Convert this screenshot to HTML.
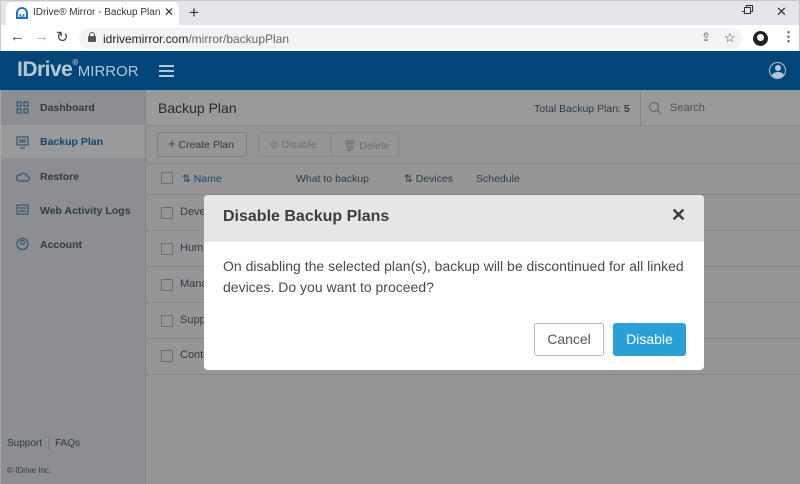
<!DOCTYPE html>
<html><head><style>
*{margin:0;padding:0;box-sizing:border-box}
body{width:800px;height:484px;overflow:hidden;font-family:"Liberation Sans",sans-serif;position:relative;background:#969696}
.abs{position:absolute}
.t{font-size:11px;color:#2e3a44}
</style></head><body>
<!-- chrome -->
<div class="abs" style="left:0;top:0;width:800px;height:25px;background:#e3e5ea;border:1px solid #c8c8c8;border-bottom:none"></div>
<div class="abs" style="left:6px;top:2px;width:173px;height:24px;background:#fff;border-radius:6px 6px 0 0"></div>
<svg class="abs" style="left:15px;top:6px" width="14" height="14"><path d="M2 7a5 5 0 0 1 10 0v5H2z" fill="none" stroke="#1a73c9" stroke-width="2"/><text x="4" y="13" font-size="7" fill="#1a73c9" font-family="Liberation Sans" font-weight="bold">M</text></svg>
<div class="abs" style="left:33px;top:7px;font-size:10px;color:#333">IDrive® Mirror - Backup Plan</div>
<div class="abs" style="left:164px;top:5px;font-size:12px;color:#333">✕</div>
<div class="abs" style="left:189px;top:3px;font-size:17px;color:#333">+</div>
<div class="abs" style="left:742px;top:11px;width:10px;height:1px;background:#333"></div>
<div class="abs" style="left:746px;top:5px;width:7px;height:7px;border:1px solid #333"></div>
<div class="abs" style="left:744px;top:7px;width:7px;height:7px;border:1px solid #333;background:#e3e5ea"></div>
<div class="abs" style="left:776px;top:4px;font-size:13px;color:#333">✕</div>
<div class="abs" style="left:0;top:25px;width:800px;height:26px;background:#fff;border-left:1px solid #c8c8c8;border-right:1px solid #c8c8c8"></div>
<div class="abs" style="left:10px;top:28px;font-size:15px;color:#444">←</div>
<div class="abs" style="left:34px;top:28px;font-size:15px;color:#aaa">→</div>
<div class="abs" style="left:56px;top:28px;font-size:15px;color:#444">↻</div>
<div class="abs" style="left:79px;top:28px;width:663px;height:21px;background:#f1f3f4;border-radius:11px"></div>
<div class="abs" style="left:89px;top:32px;width:6px;height:5px;border:1.5px solid #555;border-bottom:none;border-radius:3px 3px 0 0"></div>
<div class="abs" style="left:88px;top:36px;width:8px;height:6px;background:#555;border-radius:1px"></div>
<div class="abs" style="left:103px;top:32px;font-size:12px;color:#202124">idrivemirror.com<span style="color:#666">/mirror/backupPlan</span></div>
<div class="abs" style="left:701px;top:30px;font-size:12px;color:#555">⇪</div>
<div class="abs" style="left:724px;top:30px;font-size:13px;color:#444">☆</div>
<div class="abs" style="left:753px;top:31px;width:15px;height:15px;border-radius:50%;background:#222"></div>
<div class="abs" style="left:757px;top:34px;width:7px;height:7px;border-radius:50%;background:#fff"></div>
<div class="abs" style="left:782px;top:29px;font-size:13px;color:#444;font-weight:bold">⋮</div>
<!-- header -->
<div class="abs" style="left:0;top:51px;width:800px;height:39px;background:#00467a"></div>
<div class="abs" style="left:17px;top:58px;font-size:21px;color:#b9c7d4;font-weight:bold;letter-spacing:-0.5px">IDrive<span style="font-size:8px;vertical-align:top">®</span><span style="font-size:15px;font-weight:normal;letter-spacing:0">MIRROR</span></div>
<div class="abs" style="left:159px;top:65px;width:15px;height:2px;background:#b9c7d4;box-shadow:0 5px 0 #b9c7d4,0 10px 0 #b9c7d4"></div>
<div class="abs" style="left:769px;top:62px;width:17px;height:17px;border:1.5px solid #b9c7d4;border-radius:50%;overflow:hidden"><div style="width:6px;height:6px;background:#b9c7d4;border-radius:50%;margin:2px auto 0"></div><div style="width:12px;height:8px;background:#b9c7d4;border-radius:50%;margin:1px auto"></div></div>
<!-- sidebar -->
<div class="abs" style="left:0;top:90px;width:146px;height:394px;background:#8d8e91;border-right:1px solid #848487;border-left:1px solid #aaa"></div>
<div class="abs" style="left:1px;top:125px;width:144px;height:33px;background:#999a9c"></div>
<div class="abs t" style="left:40px;top:102px;font-weight:bold;font-size:10.5px">Dashboard</div>
<div class="abs t" style="left:40px;top:136px;font-weight:bold;font-size:10.5px;color:#14476b">Backup Plan</div>
<div class="abs t" style="left:40px;top:171px;font-weight:bold;font-size:10.5px">Restore</div>
<div class="abs t" style="left:40px;top:205px;font-weight:bold;font-size:10.5px">Web Activity Logs</div>
<div class="abs t" style="left:40px;top:239px;font-weight:bold;font-size:10.5px">Account</div>
<svg class="abs" style="left:16px;top:100px" width="14" height="160" fill="none" stroke="#355a75" stroke-width="1.3">
<rect x="1" y="2" width="4" height="4"/><rect x="8" y="2" width="4" height="4"/><rect x="1" y="9" width="4" height="4"/><rect x="8" y="9" width="4" height="4"/>
<rect x="1" y="37" width="11" height="8"/><line x1="3" y1="40" x2="10" y2="40"/><line x1="3" y1="42" x2="10" y2="42"/><line x1="4" y1="48" x2="9" y2="48"/>
<path d="M3 81a3 3 0 0 1 1-6 4 4 0 0 1 7 1 2.5 2.5 0 0 1 0 5z"/>
<rect x="1" y="105" width="11" height="9"/><line x1="3" y1="108" x2="10" y2="108"/><line x1="3" y1="111" x2="10" y2="111"/>
<circle cx="6.5" cy="144" r="5.5"/><circle cx="6.5" cy="142.5" r="2"/>
</svg>
<div class="abs t" style="left:7px;top:438px;font-size:10px">Support</div>
<div class="abs" style="left:48px;top:436px;width:1px;height:14px;background:#7a7a7a"></div>
<div class="abs t" style="left:55px;top:438px;font-size:10px">FAQs</div>
<div class="abs t" style="left:7px;top:466px;font-size:8px">© IDrive Inc.</div>
<!-- content -->
<div class="abs" style="left:146px;top:90px;width:654px;height:36px;background:#9a9a9a;border-bottom:1px solid #878787"></div>
<div class="abs" style="left:158px;top:100px;font-size:14px;color:#2a2a2a">Backup Plan</div>
<div class="abs t" style="left:534px;top:103px;font-size:10.5px">Total Backup Plan: <b>5</b></div>
<div class="abs" style="left:640px;top:90px;width:160px;height:36px;border-left:1px solid #878787"></div>
<svg class="abs" style="left:648px;top:101px" width="14" height="14" fill="none" stroke="#6a6a6a" stroke-width="1.3"><circle cx="6" cy="6" r="4.5"/><line x1="9.5" y1="9.5" x2="13" y2="13"/></svg>
<div class="abs" style="left:670px;top:102px;font-size:11px;color:#505050">Search</div>
<div class="abs" style="left:157px;top:132px;width:90px;height:25px;border:1px solid #808080;border-radius:2px"></div>
<div class="abs t" style="left:168px;top:139px;font-size:10.5px"><span style="color:#14476b;font-size:13px;line-height:8px">+</span> Create Plan</div>
<div class="abs" style="left:258px;top:132px;width:141px;height:25px;border:1px solid #888;border-radius:2px"></div>
<div class="abs" style="left:330px;top:132px;width:1px;height:25px;background:#888"></div>
<div class="abs" style="left:270px;top:139px;font-size:10.5px;color:#6e6e6e">⊘ Disable</div>
<div class="abs" style="left:343px;top:139px;font-size:10.5px;color:#6e6e6e">🗑 Delete</div>
<div class="abs" style="left:146px;top:163px;width:654px;height:1px;background:#878787"></div>
<div class="abs" style="left:146px;top:194px;width:654px;height:1px;background:#878787"></div>
<div class="abs" style="left:146px;top:230px;width:654px;height:1px;background:#878787"></div>
<div class="abs" style="left:146px;top:266px;width:654px;height:1px;background:#878787"></div>
<div class="abs" style="left:146px;top:302px;width:654px;height:1px;background:#878787"></div>
<div class="abs" style="left:146px;top:338px;width:654px;height:1px;background:#878787"></div>
<div class="abs" style="left:146px;top:374px;width:654px;height:1px;background:#878787"></div>
<div class="abs" style="left:161px;top:172px;width:12px;height:12px;border:1px solid #6e6e6e"></div>
<div class="abs t" style="left:182px;top:173px;font-size:10.5px;color:#14476b">⇅ Name</div>
<div class="abs t" style="left:296px;top:173px;font-size:10.5px">What to backup</div>
<div class="abs t" style="left:404px;top:173px;font-size:10.5px">⇅ Devices</div>
<div class="abs t" style="left:476px;top:173px;font-size:10.5px">Schedule</div>
<div class="abs" style="left:161px;top:207px;width:12px;height:12px;border:1px solid #6e6e6e"></div>
<div class="abs" style="left:161px;top:243px;width:12px;height:12px;border:1px solid #6e6e6e"></div>
<div class="abs" style="left:161px;top:279px;width:12px;height:12px;border:1px solid #6e6e6e"></div>
<div class="abs" style="left:161px;top:315px;width:12px;height:12px;border:1px solid #6e6e6e"></div>
<div class="abs" style="left:161px;top:350px;width:12px;height:12px;border:1px solid #6e6e6e"></div>
<div class="abs t" style="left:180px;top:206px;font-size:11px">Deve</div>
<div class="abs t" style="left:180px;top:242px;font-size:11px">Hum</div>
<div class="abs t" style="left:180px;top:278px;font-size:11px">Mana</div>
<div class="abs t" style="left:180px;top:314px;font-size:11px">Supp</div>
<div class="abs t" style="left:180px;top:349px;font-size:11px">Conte</div>
<!-- modal -->
<div class="abs" style="left:204px;top:195px;width:500px;height:175px;background:#fff;border-radius:4px;overflow:hidden">
<div style="height:47px;background:#e6e6e6"></div>
</div>
<div class="abs" style="left:223px;top:208px;font-size:16px;font-weight:bold;color:#3d3d3d">Disable Backup Plans</div>
<div class="abs" style="left:671px;top:205px;font-size:18px;font-weight:bold;color:#3a3a3a">✕</div>
<div class="abs" style="left:223px;top:256px;font-size:14px;color:#4a4a4a;line-height:21px;width:470px">On disabling the selected plan(s), backup will be discontinued for all linked devices. Do you want to proceed?</div>
<div class="abs" style="left:534px;top:323px;width:70px;height:33px;border:1px solid #b5b5b5;border-radius:3px;font-size:14px;color:#555;text-align:center;line-height:31px">Cancel</div>
<div class="abs" style="left:613px;top:323px;width:73px;height:33px;background:#2aa0d8;border-radius:3px;font-size:14px;color:#fff;text-align:center;line-height:33px">Disable</div>
</body></html>
